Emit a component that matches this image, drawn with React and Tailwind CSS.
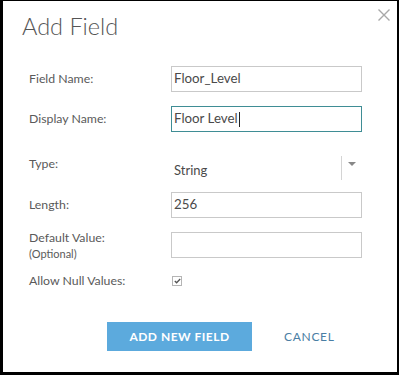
import React from "react";

const font = { fontFamily: "Lato, 'Open Sans', sans-serif" };

function Label({ children, className = "" }) {
  return (
    <div className={"w-[142px] shrink-0 text-[12.3px] text-[#5a5a5a] leading-[16px] " + className}>
      {children}
    </div>
  );
}

export default function App() {
  return (
    <div className="w-[399px] h-[375px] bg-black pt-[1px] pl-[3px] pr-[2px] pb-[3px]" style={font}>
      <div className="relative w-full h-full bg-white flex flex-col">
        <svg className="absolute left-[374px] top-[7px]" width="14" height="14" viewBox="0 0 14 14">
          <path d="M1.5 1.5 L12.5 12.5 M12.5 1.5 L1.5 12.5" stroke="#a8a8a8" strokeWidth="1.4" fill="none" />
        </svg>

        <div className="ml-[19px] mt-[11px] text-[23.5px] leading-[28px] font-light text-[#555]">Add Field</div>

        <div className="ml-[26px] flex flex-col">
          <div className="mt-[26px] flex items-center h-[26px]">
            <Label>Field Name:</Label>
            <div className="w-[191px] h-[26px] border border-[#c9c9c9] flex items-center pl-[2px] text-[13.3px] text-[#4a4a4a]">
              Floor_Level
            </div>
          </div>

          <div className="mt-[14px] flex items-center h-[26px]">
            <Label>Display Name:</Label>
            <div className="w-[191px] h-[26px] border border-[#3f8d95] flex items-center pl-[2px] text-[13.3px] text-[#4a4a4a]">
              Floor Level<span className="inline-block w-[1px] h-[15px] bg-[#222] ml-[1px]"></span>
            </div>
          </div>

          <div className="mt-[24px] flex items-start h-[24px]">
            <Label>Type:</Label>
            <div className="w-[191px] h-[24px] flex items-start">
              <div className="flex-1 pl-[3px] pt-[6px] text-[13px] leading-[16px] text-[#4a4a4a]">String</div>
              <div className="w-[1px] h-[24px] bg-[#d4d4d4]"></div>
              <div className="w-[20px] flex justify-center pt-[6px]">
                <svg width="8" height="4" viewBox="0 0 8 4">
                  <path d="M0 0 L8 0 L4 4 Z" fill="#888" />
                </svg>
              </div>
            </div>
          </div>

          <div className="mt-[12px] flex items-center h-[26px]">
            <Label>Length:</Label>
            <div className="w-[191px] h-[26px] border border-[#c9c9c9] flex items-center pl-[2px] text-[13.3px] text-[#4a4a4a]">
              256
            </div>
          </div>

          <div className="mt-[14px] flex items-start h-[26px]">
            <div className="w-[142px] shrink-0 flex flex-col">
              <div className="text-[12.3px] leading-[16px] text-[#5a5a5a] -mt-[2px]">Default Value:</div>
              <div className="text-[11px] leading-[12px] text-[#5a5a5a] mt-[2px]">(Optional)</div>
            </div>
            <div className="w-[191px] h-[26px] border border-[#c9c9c9]"></div>
          </div>

          <div className="mt-[15px] flex items-center h-[16px]">
            <Label>Allow Null Values:</Label>
            <div className="ml-[1px] w-[10px] h-[10px] border border-[#b5b5b5] flex items-center justify-center bg-white">
              <svg width="7" height="6" viewBox="0 0 7 6">
                <path d="M0.8 3 L2.6 4.8 L6.2 1" stroke="#555" strokeWidth="1.3" fill="none" />
              </svg>
            </div>
          </div>
        </div>

        <div className="mt-[33px] ml-[104px] flex items-center">
          <div className="w-[145px] h-[29px] bg-[#5caadd] flex items-center justify-center text-white text-[12px] font-bold tracking-[0.5px]">
            ADD NEW FIELD
          </div>
          <div className="ml-[32px] text-[12px] tracking-[0.7px] text-[#4a7ea4]">CANCEL</div>
        </div>
      </div>
    </div>
  );
}
